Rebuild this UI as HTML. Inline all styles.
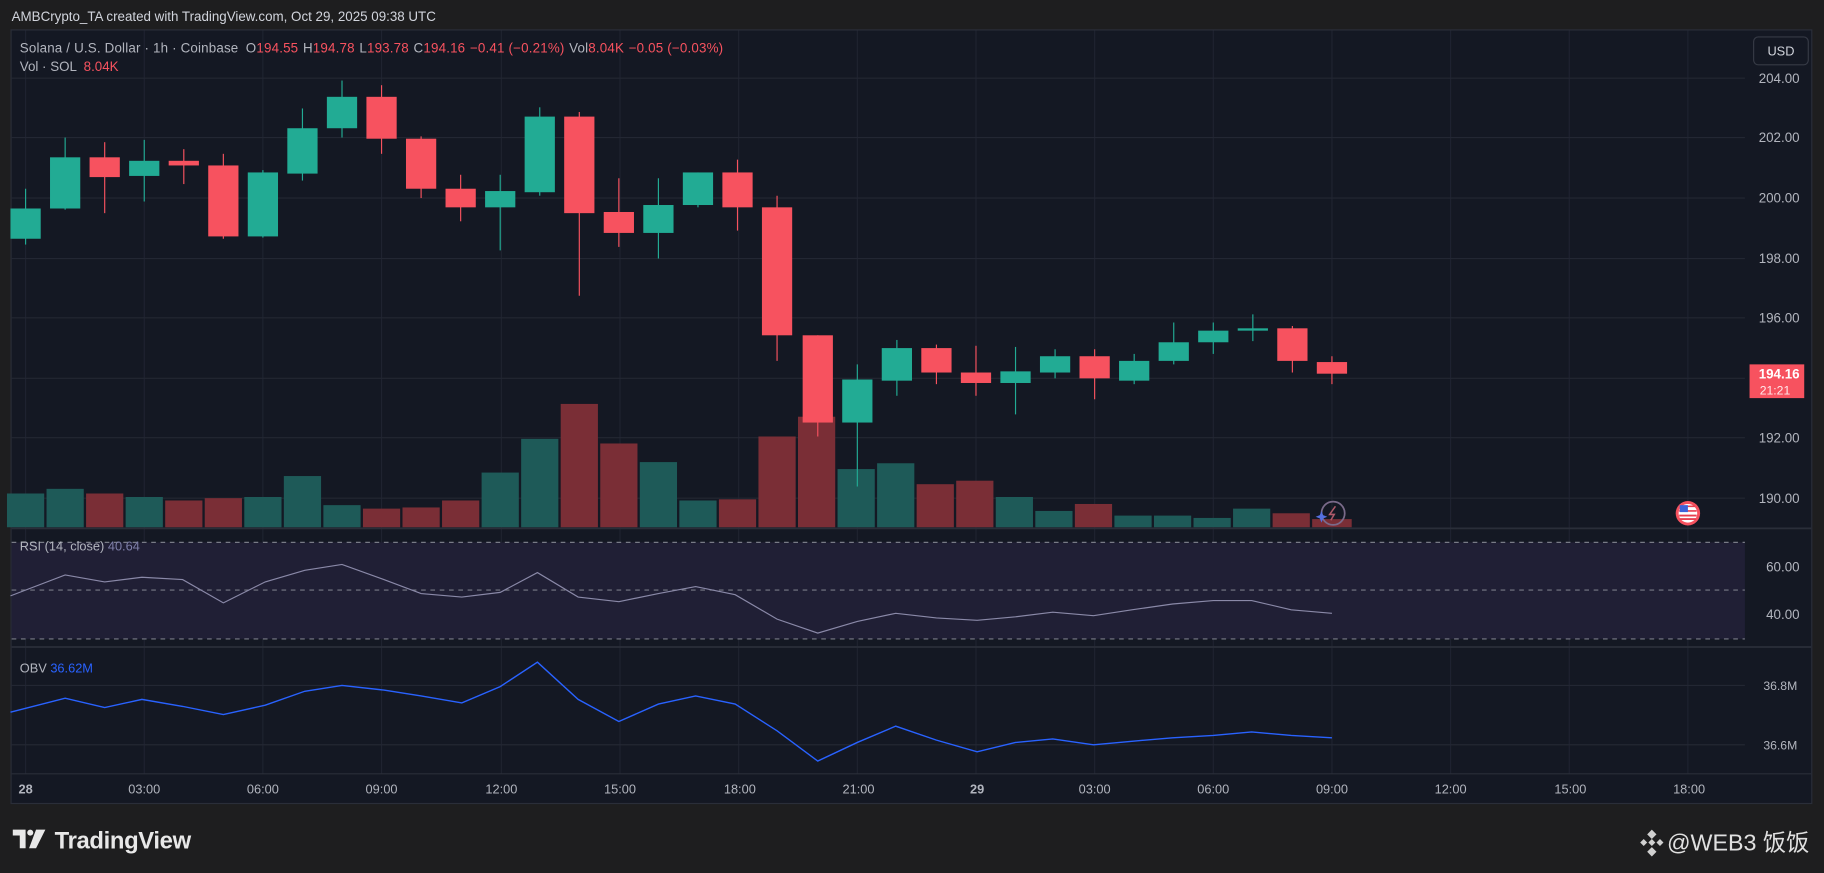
<!DOCTYPE html>
<html><head><meta charset="utf-8"><style>
html,body{margin:0;padding:0;background:#1e1e1f;overflow:hidden}
svg{display:block}
text{font-family:"Liberation Sans","Noto Sans CJK SC",sans-serif}
</style></head><body>
<svg width="1824" height="873" viewBox="0 0 1568 750" xmlns="http://www.w3.org/2000/svg">
<rect x="0" y="0" width="1568" height="750" fill="#1e1e1f"/>
<text x="10" y="18" font-size="11.5" fill="#d1d4dc">AMBCrypto_TA created with TradingView.com, Oct 29, 2025 09:38 UTC</text>
<rect x="9.5" y="25.5" width="1548" height="665" fill="#141823" stroke="#2a2e39"/>
<g stroke="#1f2330" stroke-width="1">
<line x1="22" y1="26" x2="22" y2="665"/><line x1="124" y1="26" x2="124" y2="665"/><line x1="226" y1="26" x2="226" y2="665"/><line x1="328" y1="26" x2="328" y2="665"/><line x1="431" y1="26" x2="431" y2="665"/><line x1="533" y1="26" x2="533" y2="665"/><line x1="635" y1="26" x2="635" y2="665"/><line x1="737" y1="26" x2="737" y2="665"/><line x1="839" y1="26" x2="839" y2="665"/><line x1="941" y1="26" x2="941" y2="665"/><line x1="1043" y1="26" x2="1043" y2="665"/><line x1="1145" y1="26" x2="1145" y2="665"/><line x1="1247" y1="26" x2="1247" y2="665"/><line x1="1349" y1="26" x2="1349" y2="665"/><line x1="1451" y1="26" x2="1451" y2="665"/>
</g>
<g stroke="#232733">
<line x1="10" y1="67" x2="1500" y2="67"/><line x1="10" y1="118" x2="1500" y2="118"/><line x1="10" y1="170" x2="1500" y2="170"/><line x1="10" y1="222" x2="1500" y2="222"/><line x1="10" y1="273" x2="1500" y2="273"/><line x1="10" y1="325" x2="1500" y2="325"/><line x1="10" y1="376" x2="1500" y2="376"/><line x1="10" y1="428" x2="1500" y2="428"/>
<line x1="10" y1="589" x2="1500" y2="589"/><line x1="10" y1="640" x2="1500" y2="640"/>
</g>
<line x1="10" y1="454" x2="1557" y2="454" stroke="#2a2e39" stroke-width="1.5"/>
<line x1="10" y1="556" x2="1557" y2="556" stroke="#2a2e39" stroke-width="1.5"/>
<line x1="10" y1="665" x2="1557" y2="665" stroke="#2a2e39" stroke-width="1"/>
<g>
<rect x="6" y="424" width="32" height="29" fill="#1e5a58"/>
<rect x="40" y="420" width="32" height="33" fill="#1e5a58"/>
<rect x="74" y="424" width="32" height="29" fill="#7a2e36"/>
<rect x="108" y="427" width="32" height="26" fill="#1e5a58"/>
<rect x="142" y="430" width="32" height="23" fill="#7a2e36"/>
<rect x="176" y="428" width="32" height="25" fill="#7a2e36"/>
<rect x="210" y="427" width="32" height="26" fill="#1e5a58"/>
<rect x="244" y="409" width="32" height="44" fill="#1e5a58"/>
<rect x="278" y="434" width="32" height="19" fill="#1e5a58"/>
<rect x="312" y="437" width="32" height="16" fill="#7a2e36"/>
<rect x="346" y="436" width="32" height="17" fill="#7a2e36"/>
<rect x="380" y="430" width="32" height="23" fill="#7a2e36"/>
<rect x="414" y="406" width="32" height="47" fill="#1e5a58"/>
<rect x="448" y="377" width="32" height="76" fill="#1e5a58"/>
<rect x="482" y="347" width="32" height="106" fill="#7a2e36"/>
<rect x="516" y="381" width="32" height="72" fill="#7a2e36"/>
<rect x="550" y="397" width="32" height="56" fill="#1e5a58"/>
<rect x="584" y="430" width="32" height="23" fill="#1e5a58"/>
<rect x="618" y="429" width="32" height="24" fill="#7a2e36"/>
<rect x="652" y="375" width="32" height="78" fill="#7a2e36"/>
<rect x="686" y="358" width="32" height="95" fill="#7a2e36"/>
<rect x="720" y="403" width="32" height="50" fill="#1e5a58"/>
<rect x="754" y="398" width="32" height="55" fill="#1e5a58"/>
<rect x="788" y="416" width="32" height="37" fill="#7a2e36"/>
<rect x="822" y="413" width="32" height="40" fill="#7a2e36"/>
<rect x="856" y="427" width="32" height="26" fill="#1e5a58"/>
<rect x="890" y="439" width="32" height="14" fill="#1e5a58"/>
<rect x="924" y="433" width="32" height="20" fill="#7a2e36"/>
<rect x="958" y="443" width="32" height="10" fill="#1e5a58"/>
<rect x="992" y="443" width="32" height="10" fill="#1e5a58"/>
<rect x="1026" y="445" width="32" height="8" fill="#1e5a58"/>
<rect x="1060" y="437" width="32" height="16" fill="#1e5a58"/>
<rect x="1094" y="441" width="32" height="12" fill="#7a2e36"/>
<rect x="1128" y="446" width="34" height="7" fill="#7a2e36"/>
</g>
<g stroke-width="1">
<g stroke="#22ab94" fill="#22ab94">
<line x1="22" y1="162" x2="22" y2="210"/><rect x="9" y="179" width="26" height="26" stroke="none"/>
<line x1="56" y1="118" x2="56" y2="180"/><rect x="43" y="135" width="26" height="44" stroke="none"/>
<line x1="124" y1="120" x2="124" y2="173"/><rect x="111" y="138" width="26" height="13" stroke="none"/>
<line x1="226" y1="146" x2="226" y2="204"/><rect x="213" y="148" width="26" height="55" stroke="none"/>
<line x1="260" y1="93" x2="260" y2="155"/><rect x="247" y="110" width="26" height="39" stroke="none"/>
<line x1="294" y1="69" x2="294" y2="118"/><rect x="281" y="83" width="26" height="27" stroke="none"/>
<line x1="430" y1="150" x2="430" y2="215"/><rect x="417" y="164" width="26" height="14" stroke="none"/>
<line x1="464" y1="92" x2="464" y2="168"/><rect x="451" y="100" width="26" height="65" stroke="none"/>
<line x1="566" y1="153" x2="566" y2="222"/><rect x="553" y="176" width="26" height="24" stroke="none"/>
<line x1="600" y1="148" x2="600" y2="178"/><rect x="587" y="148" width="26" height="28" stroke="none"/>
<line x1="737" y1="313" x2="737" y2="418"/><rect x="724" y="326" width="26" height="37" stroke="none"/>
<line x1="771" y1="292" x2="771" y2="340"/><rect x="758" y="299" width="26" height="28" stroke="none"/>
<line x1="873" y1="298" x2="873" y2="356"/><rect x="860" y="319" width="26" height="10" stroke="none"/>
<line x1="907" y1="300" x2="907" y2="325"/><rect x="894" y="306" width="26" height="14" stroke="none"/>
<line x1="975" y1="304" x2="975" y2="330"/><rect x="962" y="310" width="26" height="17" stroke="none"/>
<line x1="1009" y1="277" x2="1009" y2="313"/><rect x="996" y="294" width="26" height="16" stroke="none"/>
<line x1="1043" y1="277" x2="1043" y2="304"/><rect x="1030" y="284" width="26" height="10" stroke="none"/>
<line x1="1077" y1="270" x2="1077" y2="293"/><rect x="1064" y="282" width="26" height="2" stroke="none"/>
</g>
<g stroke="#f7525f" fill="#f7525f">
<line x1="90" y1="122" x2="90" y2="183"/><rect x="77" y="135" width="26" height="17" stroke="none"/>
<line x1="158" y1="128" x2="158" y2="158"/><rect x="145" y="138" width="26" height="4" stroke="none"/>
<line x1="192" y1="132" x2="192" y2="205"/><rect x="179" y="142" width="26" height="61" stroke="none"/>
<line x1="328" y1="73" x2="328" y2="132"/><rect x="315" y="83" width="26" height="36" stroke="none"/>
<line x1="362" y1="117" x2="362" y2="170"/><rect x="349" y="119" width="26" height="43" stroke="none"/>
<line x1="396" y1="150" x2="396" y2="190"/><rect x="383" y="162" width="26" height="16" stroke="none"/>
<line x1="498" y1="96" x2="498" y2="254"/><rect x="485" y="100" width="26" height="83" stroke="none"/>
<line x1="532" y1="153" x2="532" y2="212"/><rect x="519" y="182" width="26" height="18" stroke="none"/>
<line x1="634" y1="137" x2="634" y2="198"/><rect x="621" y="148" width="26" height="30" stroke="none"/>
<line x1="668" y1="168" x2="668" y2="310"/><rect x="655" y="178" width="26" height="110" stroke="none"/>
<line x1="703" y1="288" x2="703" y2="375"/><rect x="690" y="288" width="26" height="75" stroke="none"/>
<line x1="805" y1="296" x2="805" y2="330"/><rect x="792" y="299" width="26" height="21" stroke="none"/>
<line x1="839" y1="297" x2="839" y2="340"/><rect x="826" y="320" width="26" height="9" stroke="none"/>
<line x1="941" y1="300" x2="941" y2="343"/><rect x="928" y="306" width="26" height="19" stroke="none"/>
<line x1="1111" y1="280" x2="1111" y2="320"/><rect x="1098" y="282" width="26" height="28" stroke="none"/>
<line x1="1145" y1="306" x2="1145" y2="330"/><rect x="1132" y="311" width="26" height="10" stroke="none"/>
</g>
</g>
<circle cx="1146" cy="441" r="10" fill="none" stroke="#7a6a8a" stroke-width="1.5"/>
<path d="M1148 435 L1143 442 L1147 442 L1144 447" fill="none" stroke="#b05a6a" stroke-width="1.3"/>
<path d="M1134 444 l2 -5 l2 5 l-2 5z M1131 444 l5 -2 l5 2 l-5 2z" fill="#5570e0"/>
<circle cx="1451" cy="441" r="10.5" fill="#f7525f"/>
<circle cx="1451" cy="441" r="8" fill="#ffffff"/>
<path d="M1443.5 443 h15 M1444 446 h14" stroke="#e84050" stroke-width="1.6"/>
<path d="M1445 435 h12 M1443.5 439 h15" stroke="#e84050" stroke-width="1.4"/>
<rect x="1444" y="434" width="7" height="6" fill="#3d62d9"/>
<rect x="10" y="466" width="1490" height="83" fill="#201f35"/>
<g stroke="#787b86" stroke-dasharray="4 4" stroke-width="1">
<line x1="10" y1="466" x2="1500" y2="466"/><line x1="10" y1="507" x2="1500" y2="507"/><line x1="10" y1="549" x2="1500" y2="549"/>
</g>
<polyline fill="none" stroke="#8a89a8" stroke-width="1" points="9,512 56,494 90,500 122,496 157,498 192,518 228,500 262,490 294,485 330,498 362,510 397,513 430,509 462,492 497,513 532,517 566,510 598,504 632,511 668,532 703,544 737,534 770,527 805,531 840,533 873,530 905,526 940,529 973,524 1008,519 1043,516 1076,516 1110,524 1145,527"/>
<text x="17" y="473" font-size="11" fill="#b2b5be">RSI (14, close) <tspan fill="#7e7fa8">40.64</tspan></text>
<polyline fill="none" stroke="#2962ff" stroke-width="1.2" points="9,612 56,600 90,608 122,601 157,607 192,614 228,606 262,594 294,589 330,593 362,598 397,604 430,590 462,569 497,601 532,620 566,605 598,598 632,605 668,628 703,654 737,638 770,624 805,636 840,646 873,638 905,635 940,640 973,637 1008,634 1043,632 1076,629 1110,632 1145,634"/>
<text x="17" y="578" font-size="11" fill="#b2b5be">OBV <tspan fill="#2962ff">36.62M</tspan></text>
<text x="17" y="45" font-size="11.5" fill="#b2b5be" letter-spacing="0.15">Solana / U.S. Dollar · 1h · Coinbase <tspan dx="3">O</tspan><tspan fill="#f7525f">194.55</tspan><tspan dx="4">H</tspan><tspan fill="#f7525f">194.78</tspan><tspan dx="4">L</tspan><tspan fill="#f7525f">193.78</tspan><tspan dx="4">C</tspan><tspan fill="#f7525f">194.16</tspan><tspan dx="4" fill="#f7525f">−0.41 (−0.21%)</tspan><tspan dx="4">Vol</tspan><tspan fill="#f7525f">8.04K</tspan><tspan dx="4" fill="#f7525f">−0.05 (−0.03%)</tspan></text>
<text x="17" y="61" font-size="11.5" fill="#b2b5be">Vol · SOL <tspan dx="3" fill="#f7525f">8.04K</tspan></text>
<rect x="1507.5" y="31.5" width="47" height="24" rx="4" fill="#141823" stroke="#363a45"/>
<text x="1531" y="47.5" font-size="11" fill="#d1d4dc" text-anchor="middle">USD</text>
<g font-size="11.5" fill="#b2b5be" text-anchor="end">
<text x="1547" y="71">204.00</text><text x="1547" y="122">202.00</text><text x="1547" y="174">200.00</text><text x="1547" y="226">198.00</text><text x="1547" y="277">196.00</text><text x="1547" y="380">192.00</text><text x="1547" y="432">190.00</text>
<text x="1547" y="491">60.00</text><text x="1547" y="532">40.00</text>
<text x="1545" y="593" font-size="10.5">36.8M</text><text x="1545" y="644" font-size="10.5">36.6M</text>
</g>
<rect x="1504" y="313" width="47" height="29" fill="#f7525f"/>
<text x="1547" y="325" font-size="11.5" font-weight="bold" fill="#ffffff" text-anchor="end">194.16</text>
<text x="1539" y="339" font-size="10.5" fill="#ffe8ea" text-anchor="end">21:21</text>
<g font-size="11" fill="#b2b5be" text-anchor="middle">
<text x="22" y="682" font-weight="bold">28</text><text x="124" y="682">03:00</text><text x="226" y="682">06:00</text><text x="328" y="682">09:00</text><text x="431" y="682">12:00</text><text x="533" y="682">15:00</text><text x="636" y="682">18:00</text><text x="738" y="682">21:00</text><text x="840" y="682" font-weight="bold">29</text><text x="941" y="682">03:00</text><text x="1043" y="682">06:00</text><text x="1145" y="682">09:00</text><text x="1247" y="682">12:00</text><text x="1350" y="682">15:00</text><text x="1452" y="682">18:00</text>
</g>
<path d="M11 713 h11 v16 h-5 v-11 h-6z" fill="#e8e8e8"/>
<circle cx="26" cy="715.5" r="2.6" fill="#e8e8e8"/>
<path d="M31 713 h8 l-8 16 h-6z" fill="#e8e8e8"/>
<text x="47" y="729" font-size="20.5" font-weight="bold" fill="#e8e8e8" letter-spacing="-0.3">TradingView</text>
<g fill="#d0d0d0"><path d="M1420 713 l4 4 l-4 4 l-4 -4z M1420 728 l4 4 l-4 4 l-4 -4z M1413 721 l3 3 l-3 3 l-3 -3z M1427 721 l3 3 l-3 3 l-3 -3z M1420 721 l3 3 l-3 3 l-3 -3z"/></g>
<text x="1433" y="731" font-size="20" fill="#e0e0e0">@WEB3 饭饭</text>
</svg>
</body></html>
